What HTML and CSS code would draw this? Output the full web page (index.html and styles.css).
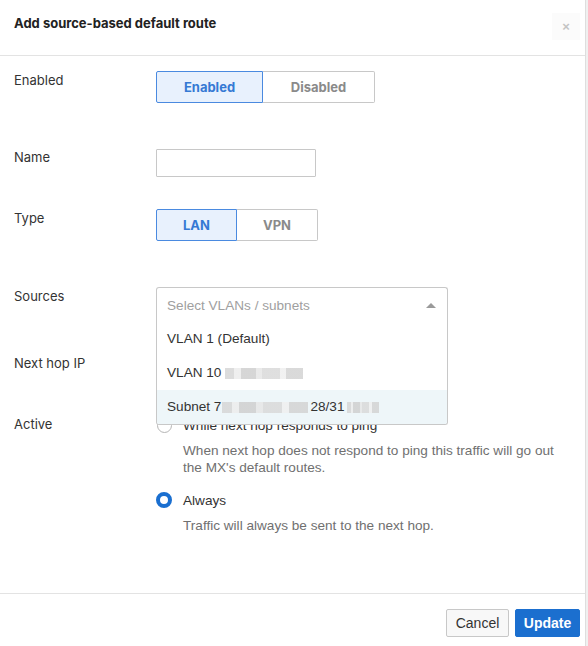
FILE: index.html
```html
<!DOCTYPE html>
<html>
<head>
<meta charset="utf-8">
<link rel="stylesheet" href="styles.css">
</head>
<body>
<div class="modal">
  <div class="header">
    <div class="title">Add source-based default route</div>
    <div class="close">&times;</div>
  </div>
  <div class="body">
    <div class="row row-enabled">
      <div class="label">Enabled</div>
      <div class="seg">
        <span class="seg-btn active w-en">Enabled</span>
        <span class="seg-btn w-dis">Disabled</span>
      </div>
    </div>
    <div class="row row-name">
      <div class="label">Name</div>
      <input class="text-input" type="text">
    </div>
    <div class="row row-type">
      <div class="label">Type</div>
      <div class="seg">
        <span class="seg-btn active w-lan">LAN</span>
        <span class="seg-btn w-vpn">VPN</span>
      </div>
    </div>
    <div class="row row-sources">
      <div class="label">Sources</div>
      <div class="select">
        <div class="select-head">
          <span class="placeholder">Select VLANs / subnets</span>
          <span class="caret"></span>
        </div>
        <div class="menu">
          <div class="opt">VLAN 1 (Default)</div>
          <div class="opt">VLAN 10 <span class="blur b1"></span></div>
          <div class="opt hl">Subnet 7<span class="blur b2"></span>28/31 <span class="blur b3"></span></div>
        </div>
      </div>
    </div>
    <div class="row row-hop">
      <div class="label">Next hop IP</div>
      <input class="text-input" type="text">
    </div>
    <div class="row row-active">
      <div class="label">Active</div>
      <div class="radios">
        <div class="radio-line">
          <span class="radio"></span>
          <span class="radio-text">While next hop responds to ping</span>
        </div>
        <div class="desc">When next hop does not respond to ping this traffic will go out the MX's default routes.</div>
        <div class="radio-line second">
          <span class="radio on"></span>
          <span class="radio-text">Always</span>
        </div>
        <div class="desc">Traffic will always be sent to the next hop.</div>
      </div>
    </div>
  </div>
  <div class="footer">
    <button class="btn cancel">Cancel</button>
    <button class="btn update">Update</button>
  </div>
</div>
</body>
</html>
```

FILE: styles.css
```css
* { box-sizing: border-box; }
html, body { margin: 0; padding: 0; }
body {
  background: #f0f0f0;
  width: 588px;
  height: 646px;
  overflow: hidden;
  font-family: "Liberation Sans", Arial, sans-serif;
  color: #333;
}
.modal {
  width: 586px;
  height: 646px;
  background: #fff;
  border-right: 1px solid #dedede;
  display: flex;
  flex-direction: column;
}
.header {
  height: 56px;
  border-bottom: 1px solid #e3e3e3;
  display: flex;
  align-items: flex-start;
  justify-content: space-between;
  padding: 14px 5px 0 14px;
  flex: none;
}
.title {
  font-family: Inter, "Liberation Sans", sans-serif;
  font-weight: 700;
  font-size: 13px;
  line-height: 18px;
  color: #222;
}
.close {
  width: 28px;
  height: 27px;
  background: #fbfbfb;
  color: #c4c4c4;
  font-size: 13px;
  font-weight: bold;
  line-height: 27px;
  text-align: center;
  margin-top: -1px;
}
.body {
  flex: 1;
  padding: 15px 14px 0 14px;
}
.row {
  display: grid;
  grid-template-columns: 142px 1fr;
  align-items: start;
}
.label {
  font-family: Inter, "Liberation Sans", sans-serif;
  font-size: 13px;
  line-height: 18px;
  color: #333;
}
.row-name { margin-top: 46px; }
.row-name .label, .row-hop .label { margin-top: -1px; }
.row-type { margin-top: 32px; }
.row-sources { margin-top: 46px; position: relative; z-index: 2; }
.row-hop { margin-top: 33px; }
.row-active { margin-top: 32px; }

.seg { display: flex; }
.seg-btn {
  height: 32px;
  border: 1px solid #c8c8c8;
  font-family: Inter, "Liberation Sans", sans-serif;
  font-weight: 700;
  font-size: 13px;
  line-height: 30px;
  color: #8a8a8a;
  text-align: center;
  background: #fff;
}
.seg-btn:first-child { border-radius: 2px 0 0 2px; }
.seg-btn:last-child { border-radius: 0 2px 2px 0; border-left: none; }
.seg-btn.active {
  background: #e8f1fd;
  border-color: #4a8ae0;
  color: #3579d4;
}
.w-en { width: 107px; }
.w-dis { width: 112px; }
.w-lan { width: 81px; }
.w-vpn { width: 81px; }

.text-input {
  width: 160px;
  height: 28px;
  border: 1px solid #c8c8c8;
  border-radius: 1px;
  background: #fff;
  margin: 0;
  padding: 0;
}

.select {
  width: 292px;
  height: 35px;
  position: relative;
}
.select-head {
  height: 36px;
  border: 1px solid #c8c8c8;
  border-bottom: 1px solid #e4e4e4;
  border-radius: 3px 3px 0 0;
  display: flex;
  align-items: center;
  justify-content: space-between;
  padding: 0 10px 0 10px;
  background: #fff;
}
.placeholder {
  font-size: 13.6px;
  color: #a0a0a0;
}
.caret {
  width: 0;
  height: 0;
  border-left: 5px solid transparent;
  border-right: 5px solid transparent;
  border-bottom: 5px solid #9a9a9a;
  margin-right: 1px;
}
.menu {
  position: absolute;
  left: 0;
  top: 35px;
  width: 292px;
  background: #fff;
  border: 1px solid #c8c8c8;
  border-top: none;
  border-radius: 0 0 3px 3px;
  overflow: hidden;
}
.opt {
  height: 34px;
  line-height: 34px;
  padding-left: 10px;
  font-size: 13.6px;
  color: #333;
  display: flex;
  align-items: center;
  white-space: nowrap;
}
.opt.hl { background: #eef6f9; height: 34px; }
.blur {
  display: inline-block;
  height: 11px;
  background: linear-gradient(90deg, #d6d6d6 0 12%, #ececec 12% 20%, #cfcfcf 20% 40%, #e6e6e6 40% 48%, #d9d9d9 48% 70%, #efefef 70% 78%, #d3d3d3 78% 100%);
  opacity: 0.85;
}
.b1 { width: 78px; margin-left: 4px; }
.b2 { width: 86px; margin: 0 2px 0 1px; }
.b3 { width: 32px; margin-left: 3px; }

.radios { padding-top: 1px; }
.radio-line {
  display: flex;
  align-items: center;
  height: 18px;
}
.radio {
  width: 15px;
  height: 15px;
  border: 1px solid #b5b5b5;
  border-radius: 50%;
  margin-left: 1px;
  margin-right: 11px;
  flex: none;
  background: #fff;
}
.radio.on {
  width: 16px;
  height: 16px;
  border: 4px solid #1a6fd0;
  margin-left: 0;
  margin-right: 11px;
}
.radio-text {
  font-size: 13.6px;
  color: #333;
}
.desc {
  margin-left: 27px;
  margin-top: 8px;
  font-size: 13.6px;
  line-height: 17px;
  color: #707070;
  width: 385px;
}
.radio-line.second { margin-top: 15px; }

.footer {
  flex: none;
  height: 53px;
  border-top: 1px solid #e3e3e3;
  display: flex;
  justify-content: flex-end;
  align-items: flex-start;
  padding: 15px 5px 0 0;
  gap: 6px;
}
.btn {
  height: 28px;
  font-family: "Liberation Sans", Arial, sans-serif;
  font-size: 14px;
  border-radius: 2px;
  padding: 0;
  margin: 0;
}
.cancel {
  width: 63px;
  background: #f8f8f8;
  border: 1px solid #c8c8c8;
  color: #333;
}
.update {
  width: 65px;
  background: #1b6fcf;
  border: 1px solid #1b6fcf;
  color: #fff;
  font-weight: 600;
}
```
